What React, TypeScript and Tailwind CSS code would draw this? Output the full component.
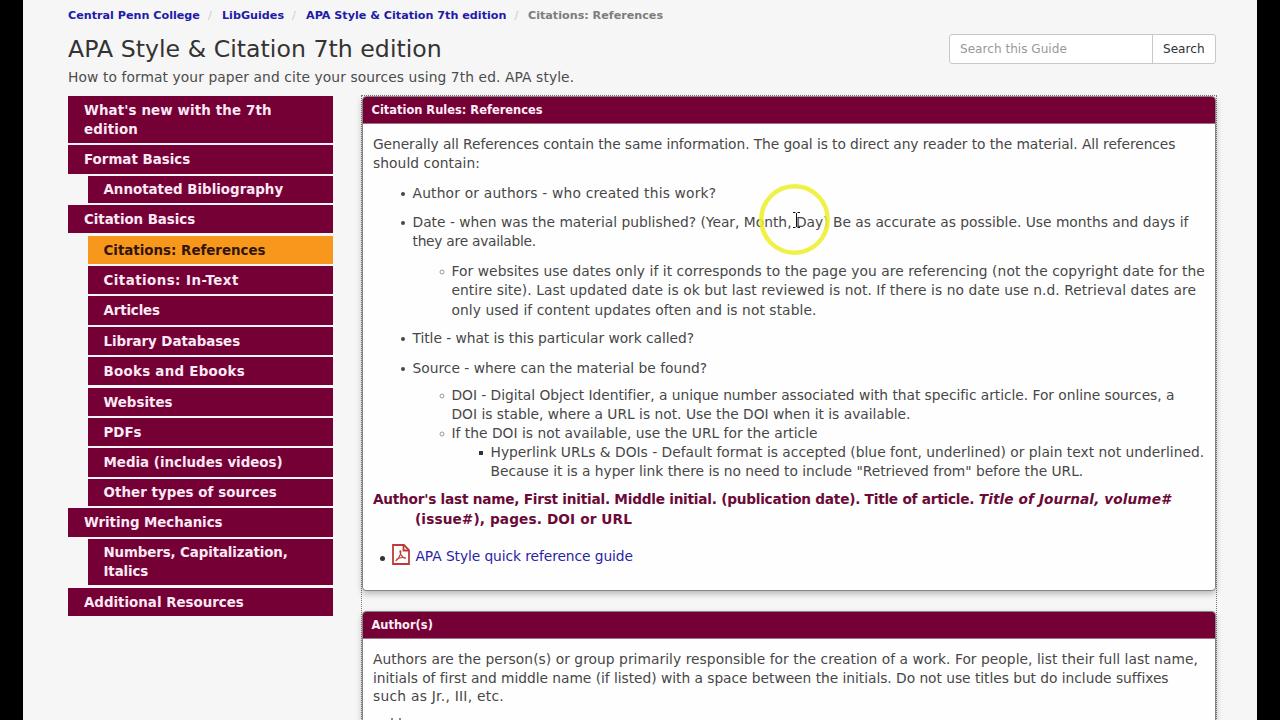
import React from 'react'

const navItems = [
  { label: "What's new with the 7th edition", box: 'h-[47px] mb-[2px] tracking-[0.13px]' },
  { label: 'Format Basics', box: 'h-[29px] mb-[2px]' },
  { label: 'Annotated Bibliography', box: 'h-[27px] mb-[2px]', sub: true },
  { label: 'Citation Basics', box: 'h-[28px] mb-[3px] tracking-[-0.06px]' },
  { label: 'Citations: References', box: 'h-[28px] mb-[2px]', sub: true, active: true },
  { label: 'Citations: In-Text', box: 'h-[28px] mb-[2px] tracking-[0.45px]', sub: true },
  { label: 'Articles', box: 'h-[29px] mb-[2px] tracking-[-0.15px]', sub: true },
  { label: 'Library Databases', box: 'h-[28px] mb-[2px] tracking-[-0.06px]', sub: true },
  { label: 'Books and Ebooks', box: 'h-[28px] mb-[3px] tracking-[0.28px]', sub: true },
  { label: 'Websites', box: 'h-[28px] mb-[2px]', sub: true },
  { label: 'PDFs', box: 'h-[28px] mb-[2px]', sub: true },
  { label: 'Media (includes videos)', box: 'h-[29px] mb-[2px]', sub: true },
  { label: 'Other types of sources', box: 'h-[27px] mb-[2px] tracking-[0.06px]', sub: true },
  { label: 'Writing Mechanics', box: 'h-[29px] mb-[2px] tracking-[-0.06px]' },
  { label: 'Numbers, Capitalization, Italics', box: 'h-[46px] mb-[3px] tracking-[-0.12px]', sub: true },
  { label: 'Additional Resources', box: 'h-[28px]' },
]

const Line = ({ className = '', children }: { className?: string; children: React.ReactNode }) => (
  <span className={`block whitespace-nowrap ${className}`}>{children}</span>
)

const Crumbs = () => (
  <nav className="flex h-[14px] items-center whitespace-nowrap text-[11.16px] font-bold leading-[14px] text-[#221aa8]">
    <a className="w-[154px]">
      Central Penn College<span className="ml-2 font-normal text-[#ccc]">/</span>
    </a>
    <a className="w-[84px]">
      LibGuides<span className="ml-2 font-normal text-[#ccc]">/</span>
    </a>
    <a className="w-[222px]">
      APA Style & Citation 7th edition<span className="ml-2 font-normal text-[#ccc]">/</span>
    </a>
    <span className="text-[#7d7d7d]">Citations: References</span>
  </nav>
)

const SideNav = () => (
  <ul className="w-[265px] shrink-0">
    {navItems.map((item) => (
      <li
        key={item.label}
        className={`flex items-center pr-8 pt-[2px] text-[13.4px] font-bold leading-[18.7px] ${item.box} ${
          item.sub ? 'ml-5 pl-[15.5px]' : 'pl-4'
        } ${item.active ? 'bg-[#f7981d] text-[#33140a]' : 'bg-[#750036] text-[#fbe9f4]'}`}
      >
        {item.label}
      </li>
    ))}
  </ul>
)

const Panel = ({ title, className = '', children }: { title: string; className?: string; children: React.ReactNode }) => (
  <section className={`overflow-hidden rounded-[4px] border border-[#858585] bg-[#fefefe] shadow-[0_3px_6px_rgba(0,0,0,0.25)] ${className}`}>
    <h2 className="-mx-px -mt-px h-[28px] border-b border-[#a0708a] bg-[#750036] pl-[9.5px] text-[11.45px] font-bold leading-[29px] text-[#fdeef6]">
      {title}
    </h2>
    <div className="pl-[10px] pt-[11px] text-[13.8px] leading-[19px] text-[#474747]">{children}</div>
  </section>
)

const PdfIcon = () => (
  <svg className="mr-[5.5px] h-[21px] w-[18px] -translate-y-[2px]" viewBox="0 0 18 21" fill="none" stroke="#bf3a34" strokeWidth="1.8">
    <path d="M1 1h11l5 5v14H1z" />
    <path d="M11.5 1v5.500H17" />
    <path
      d="M8.300 6.500c-.7.600-.3 2.200.3 3.600.9 2 2.600 3.900 5.200 4.300M8.600 6.600c.5 1 .1 2.500-.3 3.800-.8 2.400-2.300 5-4.600 6.600M4.200 15.600c2.500-1.800 6-2.500 9.600-1.800"
      strokeWidth="1.200"
    />
  </svg>
)

const Pointer = () => (
  <svg className="pointer-events-none absolute left-[758px] top-[183px] h-[73px] w-[73px]" viewBox="0 0 73 73" fill="none">
    <circle cx="36.500" cy="36.500" r="33.200" stroke="#eef032" strokeOpacity="0.9" strokeWidth="4.500" />
    <path d="M35 29.500h2.500M39.500 29.500H42M38.500 30v14M35 44.500h2.500M39.500 44.500H42" stroke="#111" />
  </svg>
)

const App = () => {
  return (
    <div className="relative h-[720px] w-[1280px] overflow-hidden bg-black px-[23px] font-['DejaVu_Sans',sans-serif]">
      <main className="h-[720px] bg-[#f6f6f6] pl-[45px] pr-[40px] pt-[9px]">
        <Crumbs />
        <header className="flex h-[72px] justify-between">
          <div>
            <h1 className="mt-[10px] text-[23.6px] leading-[32px] tracking-[0.04px] text-[#333]">APA Style & Citation 7th edition</h1>
            <p className="mt-[3px] text-[13.8px] leading-[19px] tracking-[0.1px] text-[#4c4c4c]">
              How to format your paper and cite your sources using 7th ed. APA style.
            </p>
          </div>
          <div className="mr-px mt-[11px] flex h-[30px] w-[267px] rounded-[3px] border border-[#c8c8c8] bg-white text-[12.1px] leading-[28px]">
            <span className="w-[203px] border-r border-[#c8c8c8] pl-[10px] text-[#999]">Search this Guide</span>
            <span className="pl-[10px] text-[#333]">Search</span>
          </div>
        </header>

        <div className="flex items-start justify-between">
          <div className="pt-px">
            <SideNav />
          </div>

          <div className="h-[640px] w-[856px] border border-dotted border-[#777]">
            <Panel title="Citation Rules: References" className="h-[495px]">
              <Line className="tracking-[-0.083px]">
                Generally all References contain the same information. The goal is to direct any reader to the material. All references
              </Line>
              <Line className="tracking-[0.07px]">should contain:</Line>
              <ul className="mt-[11px] list-disc pl-[42.5px] [&_li>span]:-ml-[3px]">
                <li>
                  <Line className="tracking-[0.19px]">Author or authors - who created this work?</Line>
                </li>
                <li className="mt-[9.500px] leading-[19.5px]">
                  <Line className="tracking-[0.01px]">
                    Date - when was the material published? (Year, Month, Day) Be as accurate as possible. Use months and days if
                  </Line>
                  <Line className="tracking-[-0.27px]">they are available.</Line>
                  <ul className="mt-[10px] list-[circle] pl-[39px] marker:text-[#999]">
                    <li>
                      <Line className="tracking-[0.07px]">
                        For websites use dates only if it corresponds to the page you are referencing (not the copyright date for the
                      </Line>
                      <Line className="tracking-[0.06px]">
                        entire site). Last updated date is ok but last reviewed is not. If there is no date use n.d. Retrieval dates are
                      </Line>
                      <Line className="tracking-[0.075px]">only used if content updates often and is not stable.</Line>
                    </li>
                  </ul>
                </li>
                <li className="mt-[9px]">
                  <Line className="tracking-[-0.045px]">Title - what is this particular work called?</Line>
                </li>
                <li className="mt-[10.5px]">
                  <Line>Source - where can the material be found?</Line>
                  <ul className="mt-[8px] list-[circle] pl-[39px]">
                    <li className="marker:text-[#999]">
                      <Line className="tracking-[-0.037px]">
                        DOI - Digital Object Identifier, a unique number associated with that specific article. For online sources, a
                      </Line>
                      <Line>DOI is stable, where a URL is not. Use the DOI when it is available.</Line>
                    </li>
                    <li className="marker:text-[#999]">
                      <Line className="tracking-[0.02px]">If the DOI is not available, use the URL for the article</Line>
                      <ul className="list-[square] pl-[39px]">
                        <li className="marker:text-[#333]!">
                          <Line className="tracking-[0.01px]">
                            Hyperlink URLs & DOIs - Default format is accepted (blue font, underlined) or plain text not underlined.
                          </Line>
                          <Line className="tracking-[-0.02px]">
                            Because it is a hyper link there is no need to include "Retrieved from" before the URL.
                          </Line>
                        </li>
                      </ul>
                    </li>
                  </ul>
                </li>
              </ul>
              <div className="mt-[8px] text-[13.7px] font-bold leading-[20.5px] text-[#6b0a38]">
                <Line className="tracking-[-0.255px]">
                  Author's last name, First initial. Middle initial. (publication date). Title of article.{' '}
                  <em className="tracking-[0.08px]">Title of Journal, volume#</em>
                </Line>
                <Line className="pl-[42px] tracking-[0.1px]">(issue#), pages. DOI or URL</Line>
              </div>
              <div className="mt-[17px] flex h-[20px] items-center">
                <span className="ml-[7px] mr-[7px] mt-[3px] h-[5px] w-[5px] rounded-full bg-[#333]" />
                <PdfIcon />
                <a className="tracking-[-0.08px] text-[#2a24a4]">APA Style quick reference guide</a>
              </div>
            </Panel>

            <Panel title="Author(s)" className="mt-[20px] h-[140px]">
              <div className="leading-[18.7px]">
                <Line className="tracking-[0.05px]">
                  Authors are the person(s) or group primarily responsible for the creation of a work. For people, list their full last name,
                </Line>
                <Line className="tracking-[-0.036px]">
                  initials of first and middle name (if listed) with a space between the initials. Do not use titles but do include suffixes
                </Line>
                <Line className="tracking-[0.26px]">such as Jr., III, etc.</Line>
              </div>
              {/* tops of the next list row, cut off by the fold */}
              <div className="mt-[12px] flex gap-[6px] pl-[18px]">
                <span className="h-[3px] w-[2px] bg-[#888]" />
                <span className="h-[3px] w-[2px] bg-[#888]" />
              </div>
            </Panel>
          </div>
        </div>
      </main>
      <Pointer />
    </div>
  )
}

export default App
